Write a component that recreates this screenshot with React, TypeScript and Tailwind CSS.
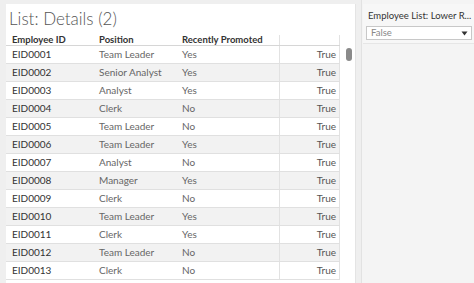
import React from 'react'

const rows = [
    ['EID0001', 'Team Leader', 'Yes'],
    ['EID0002', 'Senior Analyst', 'Yes'],
    ['EID0003', 'Analyst', 'Yes'],
    ['EID0004', 'Clerk', 'No'],
    ['EID0005', 'Team Leader', 'No'],
    ['EID0006', 'Team Leader', 'Yes'],
    ['EID0007', 'Analyst', 'No'],
    ['EID0008', 'Manager', 'Yes'],
    ['EID0009', 'Clerk', 'No'],
    ['EID0010', 'Team Leader', 'Yes'],
    ['EID0011', 'Clerk', 'Yes'],
    ['EID0012', 'Team Leader', 'No'],
    ['EID0013', 'Clerk', 'No'],
]

const App = () => {
    return (
        <div
            className="w-[474px] h-[283px] bg-[#efefef] flex overflow-hidden"
            style={{ fontFamily: 'Lato, "Open Sans", sans-serif' }}
        >
            {/* main sheet */}
            <div className="ml-[6px] mt-[4px] w-[350px] h-[279px] shrink-0 bg-white flex flex-col border-r border-[#e4e4e4]">
                <div className="h-[31px] pl-[3px] pt-[5px] text-[17px] leading-[20px] text-[#555] font-light">
                    List: Details (2)
                </div>
                <div className="flex">
                    <div className="w-[334px] shrink-0">
                        <div className="flex h-[11px] text-[9.5px] leading-[10px] font-bold text-[#333] border-b border-[#d6d6d6]">
                            <div className="w-[93px] pl-[6px]">Employee ID</div>
                            <div className="w-[83px]">Position</div>
                            <div className="w-[97px]">Recently Promoted</div>
                            <div className="w-[61px] border-l border-r border-[#e2e2e2]"></div>
                        </div>
                        {rows.map(([id, pos, promo], i) => (
                            <div
                                key={id}
                                className={
                                    'flex h-[18px] text-[10px] leading-[17px] border-b border-[#e0e0e0] ' +
                                    (i % 2 === 1 ? 'bg-[#f2f2f2]' : 'bg-white')
                                }
                            >
                                <div className="w-[93px] pl-[6px] text-[#333]">{id}</div>
                                <div className="w-[83px] text-[#666]">{pos}</div>
                                <div className="w-[97px] text-[#666]">{promo}</div>
                                <div className="w-[61px] border-l border-r border-[#e2e2e2] text-right pr-[3px] text-[#555]">
                                    True
                                </div>
                            </div>
                        ))}
                    </div>
                    <div className="flex-1 relative">
                        <div className="absolute left-[6px] top-[13px] w-[6px] h-[13px] rounded-full bg-[#8a8a8a]"></div>
                    </div>
                </div>
            </div>
            {/* filter pane */}
            <div className="ml-[5px] flex-1 min-w-0 bg-[#f4f4f4] border-l border-[#e2e2e2]">
                <div className="mt-[4px] ml-[1px] h-[40px] bg-[#f7f7f7] border-b border-[#e6e6e6]">
                    <div className="pl-[5px] pt-[5px] text-[9.5px] leading-[13px] text-[#333] whitespace-nowrap">
                        Employee List: Lower R...
                    </div>
                    <div className="ml-[3px] mt-[4px] w-[106px] h-[14px] bg-white border border-[#c8c8c8] flex items-center justify-between pl-[4px] pr-[3px]">
                        <span className="text-[9.5px] leading-[12px] text-[#888]">False</span>
                        <svg width="7" height="5" viewBox="0 0 7 5">
                            <path d="M0.5 0.5 L6.5 0.5 L3.5 4.5 Z" fill="#333" />
                        </svg>
                    </div>
                </div>
            </div>
        </div>
    )
}

export default App
